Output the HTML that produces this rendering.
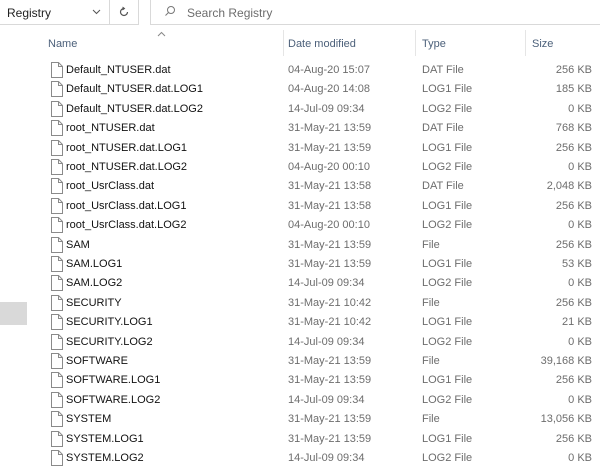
<html><head><style>
body{margin:0;width:600px;height:466px;background:#fff;font-family:"Liberation Sans",sans-serif;font-size:11px;position:relative;overflow:hidden}
.a{position:absolute;white-space:nowrap}
.box{position:absolute;border:1px solid #d9d9d9;box-sizing:border-box}
.row{position:absolute;left:0;width:600px;height:19px}
.row .n{position:absolute;left:66px;top:3px;color:#111}
.row .d{position:absolute;left:288px;top:3px;color:#6d6d6d}
.row .t{position:absolute;left:422px;top:3px;color:#6d6d6d}
.row .s{position:absolute;right:8px;top:3px;color:#6d6d6d}
.row svg{position:absolute;left:50px;top:1px}
.hd{position:absolute;top:38px;color:#4c607a;font-size:11px}
.sep{position:absolute;top:30px;width:1px;height:26px;background:#e5e5e5}
</style></head><body>
<div class="box" style="left:-1px;top:-1px;width:111px;height:26px"></div>
<div class="a" style="left:7px;top:6px;font-size:12px;color:#222">Registry</div>
<svg class="a" style="left:92px;top:9px" width="9" height="6"><path d="M1 1l3.5 3.5L8 1" stroke="#555" fill="none"/></svg>
<div class="box" style="left:109px;top:-1px;width:30px;height:26px"></div>
<svg class="a" style="left:118px;top:6px" width="12" height="12"><path d="M6 2.5A3.5 3.5 0 1 0 9.5 6" stroke="#555" fill="none" stroke-width="1.2"/><path d="M4.5 1l2 1.5-2 1.5" stroke="#555" fill="none"/></svg>
<div class="box" style="left:150px;top:-1px;width:460px;height:26px"></div>
<svg class="a" style="left:164px;top:5px" width="12" height="12"><circle cx="7" cy="5" r="3.5" stroke="#777" fill="none"/><path d="M4.5 7.5L1.5 10.5" stroke="#777"/></svg>
<div class="a" style="left:187px;top:6px;font-size:12px;color:#6d6d6d">Search Registry</div>
<svg class="a" style="left:157px;top:31px" width="9" height="6"><path d="M1 5l3.5-3.5L8 5" stroke="#888" fill="none"/></svg>
<div class="a" style="left:0;top:302px;width:27px;height:23px;background:#d9d9d9"></div>
<div class="hd" style="left:48px">Name</div>
<div class="sep" style="left:283px"></div><div class="hd" style="left:288px">Date modified</div>
<div class="sep" style="left:415px"></div><div class="hd" style="left:422px">Type</div>
<div class="sep" style="left:525px"></div><div class="hd" style="left:532px">Size</div>
<div id="rows"></div>
<script></script>
<div class="row" style="top:61px"><svg width="13" height="16"><path d="M1.5 .5h7l4 4v11h-11z M8.5 .5v4h4" stroke="#8a8a8a" fill="#fff"/></svg><span class="n">Default_NTUSER.dat</span><span class="d">04-Aug-20 15:07</span><span class="t">DAT File</span><span class="s">256 KB</span></div>
<div class="row" style="top:80.4px"><svg width="13" height="16"><path d="M1.5 .5h7l4 4v11h-11z M8.5 .5v4h4" stroke="#8a8a8a" fill="#fff"/></svg><span class="n">Default_NTUSER.dat.LOG1</span><span class="d">04-Aug-20 14:08</span><span class="t">LOG1 File</span><span class="s">185 KB</span></div>
<div class="row" style="top:99.8px"><svg width="13" height="16"><path d="M1.5 .5h7l4 4v11h-11z M8.5 .5v4h4" stroke="#8a8a8a" fill="#fff"/></svg><span class="n">Default_NTUSER.dat.LOG2</span><span class="d">14-Jul-09 09:34</span><span class="t">LOG2 File</span><span class="s">0 KB</span></div>
<div class="row" style="top:119.2px"><svg width="13" height="16"><path d="M1.5 .5h7l4 4v11h-11z M8.5 .5v4h4" stroke="#8a8a8a" fill="#fff"/></svg><span class="n">root_NTUSER.dat</span><span class="d">31-May-21 13:59</span><span class="t">DAT File</span><span class="s">768 KB</span></div>
<div class="row" style="top:138.6px"><svg width="13" height="16"><path d="M1.5 .5h7l4 4v11h-11z M8.5 .5v4h4" stroke="#8a8a8a" fill="#fff"/></svg><span class="n">root_NTUSER.dat.LOG1</span><span class="d">31-May-21 13:59</span><span class="t">LOG1 File</span><span class="s">256 KB</span></div>
<div class="row" style="top:158px"><svg width="13" height="16"><path d="M1.5 .5h7l4 4v11h-11z M8.5 .5v4h4" stroke="#8a8a8a" fill="#fff"/></svg><span class="n">root_NTUSER.dat.LOG2</span><span class="d">04-Aug-20 00:10</span><span class="t">LOG2 File</span><span class="s">0 KB</span></div>
<div class="row" style="top:177.4px"><svg width="13" height="16"><path d="M1.5 .5h7l4 4v11h-11z M8.5 .5v4h4" stroke="#8a8a8a" fill="#fff"/></svg><span class="n">root_UsrClass.dat</span><span class="d">31-May-21 13:58</span><span class="t">DAT File</span><span class="s">2,048 KB</span></div>
<div class="row" style="top:196.8px"><svg width="13" height="16"><path d="M1.5 .5h7l4 4v11h-11z M8.5 .5v4h4" stroke="#8a8a8a" fill="#fff"/></svg><span class="n">root_UsrClass.dat.LOG1</span><span class="d">31-May-21 13:58</span><span class="t">LOG1 File</span><span class="s">256 KB</span></div>
<div class="row" style="top:216.2px"><svg width="13" height="16"><path d="M1.5 .5h7l4 4v11h-11z M8.5 .5v4h4" stroke="#8a8a8a" fill="#fff"/></svg><span class="n">root_UsrClass.dat.LOG2</span><span class="d">04-Aug-20 00:10</span><span class="t">LOG2 File</span><span class="s">0 KB</span></div>
<div class="row" style="top:235.6px"><svg width="13" height="16"><path d="M1.5 .5h7l4 4v11h-11z M8.5 .5v4h4" stroke="#8a8a8a" fill="#fff"/></svg><span class="n">SAM</span><span class="d">31-May-21 13:59</span><span class="t">File</span><span class="s">256 KB</span></div>
<div class="row" style="top:255px"><svg width="13" height="16"><path d="M1.5 .5h7l4 4v11h-11z M8.5 .5v4h4" stroke="#8a8a8a" fill="#fff"/></svg><span class="n">SAM.LOG1</span><span class="d">31-May-21 13:59</span><span class="t">LOG1 File</span><span class="s">53 KB</span></div>
<div class="row" style="top:274.4px"><svg width="13" height="16"><path d="M1.5 .5h7l4 4v11h-11z M8.5 .5v4h4" stroke="#8a8a8a" fill="#fff"/></svg><span class="n">SAM.LOG2</span><span class="d">14-Jul-09 09:34</span><span class="t">LOG2 File</span><span class="s">0 KB</span></div>
<div class="row" style="top:293.8px"><svg width="13" height="16"><path d="M1.5 .5h7l4 4v11h-11z M8.5 .5v4h4" stroke="#8a8a8a" fill="#fff"/></svg><span class="n">SECURITY</span><span class="d">31-May-21 10:42</span><span class="t">File</span><span class="s">256 KB</span></div>
<div class="row" style="top:313.2px"><svg width="13" height="16"><path d="M1.5 .5h7l4 4v11h-11z M8.5 .5v4h4" stroke="#8a8a8a" fill="#fff"/></svg><span class="n">SECURITY.LOG1</span><span class="d">31-May-21 10:42</span><span class="t">LOG1 File</span><span class="s">21 KB</span></div>
<div class="row" style="top:332.6px"><svg width="13" height="16"><path d="M1.5 .5h7l4 4v11h-11z M8.5 .5v4h4" stroke="#8a8a8a" fill="#fff"/></svg><span class="n">SECURITY.LOG2</span><span class="d">14-Jul-09 09:34</span><span class="t">LOG2 File</span><span class="s">0 KB</span></div>
<div class="row" style="top:352px"><svg width="13" height="16"><path d="M1.5 .5h7l4 4v11h-11z M8.5 .5v4h4" stroke="#8a8a8a" fill="#fff"/></svg><span class="n">SOFTWARE</span><span class="d">31-May-21 13:59</span><span class="t">File</span><span class="s">39,168 KB</span></div>
<div class="row" style="top:371.4px"><svg width="13" height="16"><path d="M1.5 .5h7l4 4v11h-11z M8.5 .5v4h4" stroke="#8a8a8a" fill="#fff"/></svg><span class="n">SOFTWARE.LOG1</span><span class="d">31-May-21 13:59</span><span class="t">LOG1 File</span><span class="s">256 KB</span></div>
<div class="row" style="top:390.8px"><svg width="13" height="16"><path d="M1.5 .5h7l4 4v11h-11z M8.5 .5v4h4" stroke="#8a8a8a" fill="#fff"/></svg><span class="n">SOFTWARE.LOG2</span><span class="d">14-Jul-09 09:34</span><span class="t">LOG2 File</span><span class="s">0 KB</span></div>
<div class="row" style="top:410.2px"><svg width="13" height="16"><path d="M1.5 .5h7l4 4v11h-11z M8.5 .5v4h4" stroke="#8a8a8a" fill="#fff"/></svg><span class="n">SYSTEM</span><span class="d">31-May-21 13:59</span><span class="t">File</span><span class="s">13,056 KB</span></div>
<div class="row" style="top:429.6px"><svg width="13" height="16"><path d="M1.5 .5h7l4 4v11h-11z M8.5 .5v4h4" stroke="#8a8a8a" fill="#fff"/></svg><span class="n">SYSTEM.LOG1</span><span class="d">31-May-21 13:59</span><span class="t">LOG1 File</span><span class="s">256 KB</span></div>
<div class="row" style="top:449px"><svg width="13" height="16"><path d="M1.5 .5h7l4 4v11h-11z M8.5 .5v4h4" stroke="#8a8a8a" fill="#fff"/></svg><span class="n">SYSTEM.LOG2</span><span class="d">14-Jul-09 09:34</span><span class="t">LOG2 File</span><span class="s">0 KB</span></div>
</body></html>
